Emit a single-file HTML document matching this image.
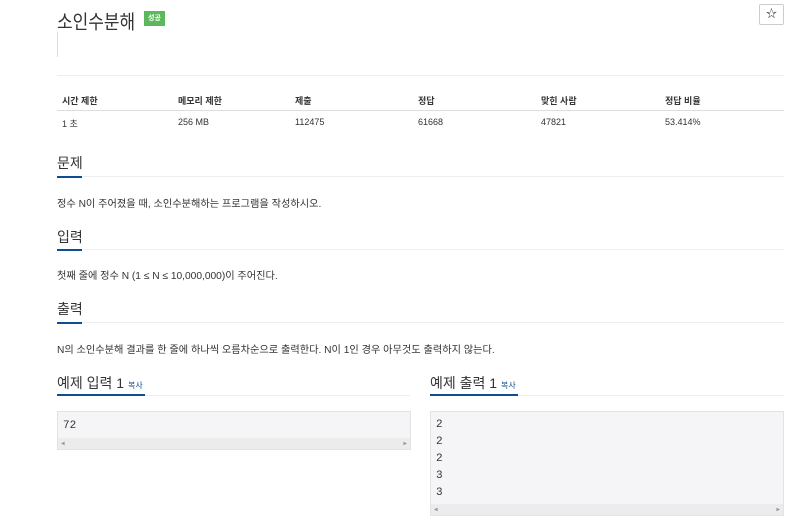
<!DOCTYPE html>
<html><head><meta charset="utf-8"><style>
*{margin:0;padding:0;box-sizing:border-box}
body{width:800px;height:527px;background:#fff;font-family:"Liberation Sans","Noto Sans CJK KR",sans-serif;color:#333;position:relative;overflow:hidden}
.a{position:absolute;white-space:nowrap}
.h{font-size:14px;color:#333}
.ul{position:absolute;height:2px;background:#0e4d92}
.ln{position:absolute;height:1px;background:#eee}
.t{font-size:10.2px;color:#333}
.th{font-size:9px;font-weight:bold;color:#333}
.td{font-size:9px;color:#333}
.pre{position:absolute;background:#f5f5f7;border:1px solid #e3e3e3;font-family:"Liberation Mono",monospace;font-size:11px;color:#333}
.sb{position:absolute;left:0;right:0;bottom:0;height:11px;background:#ececec;font-size:6px;color:#999}
</style></head><body>
<div class="a" style="left:57px;top:6px;font-size:17px;color:#333;transform:scaleY(1.12);transform-origin:top left">소인수분해</div>
<div class="a" style="left:144px;top:11px;width:21px;height:15px;background:#5cb85c;color:#fff;font-size:7px;font-weight:bold;text-align:center;line-height:15px">성공</div>
<div class="a" style="left:759px;top:4px;width:25px;height:21px;border:1px solid #ccc;border-radius:2px;font-size:11px;text-align:center;line-height:19px">☆</div>
<div class="a" style="left:57px;top:32px;width:1px;height:25px;background:#ddd"></div>
<div class="ln" style="left:57px;top:75px;width:727px"></div>
<div class="a th" style="left:62px;top:94px">시간 제한</div>
<div class="a th" style="left:178px;top:94px">메모리 제한</div>
<div class="a th" style="left:295px;top:94px">제출</div>
<div class="a th" style="left:418px;top:94px">정답</div>
<div class="a th" style="left:541px;top:94px">맞힌 사람</div>
<div class="a th" style="left:665px;top:94px">정답 비율</div>
<div class="a" style="left:57px;top:110px;width:727px;height:1px;background:#ddd"></div>
<div class="a td" style="left:62px;top:117px">1 초</div>
<div class="a td" style="left:178px;top:117px">256 MB</div>
<div class="a td" style="left:295px;top:117px">112475</div>
<div class="a td" style="left:418px;top:117px">61668</div>
<div class="a td" style="left:541px;top:117px">47821</div>
<div class="a td" style="left:665px;top:117px">53.414%</div>

<div class="a h" style="left:57px;top:153px">문제</div>
<div class="ln" style="left:57px;top:176px;width:727px"></div><div class="ul" style="left:57px;top:176px;width:25px"></div>
<div class="a t" style="left:57px;top:195px">정수 N이 주어졌을 때, 소인수분해하는 프로그램을 작성하시오.</div>

<div class="a h" style="left:57px;top:227px">입력</div>
<div class="ln" style="left:57px;top:249px;width:727px"></div><div class="ul" style="left:57px;top:249px;width:25px"></div>
<div class="a t" style="left:57px;top:267px">첫째 줄에 정수 N (1 ≤ N ≤ 10,000,000)이 주어진다.</div>

<div class="a h" style="left:57px;top:299px">출력</div>
<div class="ln" style="left:57px;top:322px;width:727px"></div><div class="ul" style="left:57px;top:322px;width:25px"></div>
<div class="a t" style="left:57px;top:341px">N의 소인수분해 결과를 한 줄에 하나씩 오름차순으로 출력한다. N이 1인 경우 아무것도 출력하지 않는다.</div>

<div class="a h" style="left:57px;top:373px">예제 입력 1 <span style="font-size:8px;color:#0e4d92">복사</span></div>
<div class="ln" style="left:57px;top:395px;width:353px"></div><div class="ul" style="left:57px;top:394px;width:88px"></div>
<div class="pre" style="left:57px;top:411px;width:354px;height:39px"><div style="padding:7px 0 0 5px;line-height:14px">72</div><div class="sb"><span style="position:absolute;left:3px;top:2px">◀</span><span style="position:absolute;right:3px;top:2px">▶</span></div></div>

<div class="a h" style="left:430px;top:373px">예제 출력 1 <span style="font-size:8px;color:#0e4d92">복사</span></div>
<div class="ln" style="left:430px;top:395px;width:354px"></div><div class="ul" style="left:430px;top:394px;width:88px"></div>
<div class="pre" style="left:430px;top:411px;width:354px;height:105px"><div style="padding:5px 0 0 5px;line-height:17px">2<br>2<br>2<br>3<br>3</div><div class="sb"><span style="position:absolute;left:3px;top:2px">◀</span><span style="position:absolute;right:3px;top:2px">▶</span></div></div>
</body></html>
